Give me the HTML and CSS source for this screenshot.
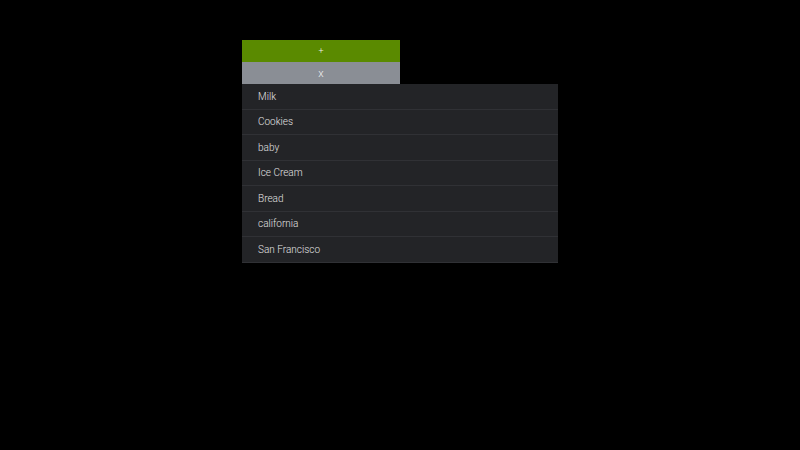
FILE: index.html
```html
<!DOCTYPE html>
<html>
<head>
<meta charset="utf-8">
<link rel="stylesheet" href="styles.css">
</head>
<body>
<div class="wrap">
  <div class="buttons">
    <button class="btn btn-add">+</button>
    <button class="btn btn-clear">x</button>
  </div>
  <ul class="list">
    <li class="item">Milk</li>
    <li class="item">Cookies</li>
    <li class="item">baby</li>
    <li class="item">Ice Cream</li>
    <li class="item">Bread</li>
    <li class="item">california</li>
    <li class="item">San Francisco</li>
  </ul>
</div>
</body>
</html>
```
FILE: styles.css
```css
html, body {
  margin: 0;
  padding: 0;
  background: #000;
  font-family: Roboto, "Liberation Sans", sans-serif;
}
.wrap {
  padding: 40px 0 0 242px;
  width: 316px;
}
.buttons {
  display: flex;
  flex-direction: column;
  width: 158px;
}
.btn {
  border: 0;
  margin: 0;
  padding: 0;
  height: 22px;
  font-family: Roboto, "Liberation Sans", sans-serif;
  font-weight: 300;
  color: #f0f0f0;
  cursor: pointer;
}
.btn-add {
  background: #5a8a00;
  font-size: 9px;
}
.btn-clear {
  background: #8a8e95;
  font-size: 11px;
}
.list {
  list-style: none;
  margin: 0;
  padding: 0;
  background: #232427;
}
.item {
  box-sizing: border-box;
  height: 25.5px;
  padding: 0 16px;
  display: flex;
  align-items: center;
  font-size: 10px;
  font-weight: 300;
  color: #e2e2e2;
  border-bottom: 1px solid #303135;
}
```
